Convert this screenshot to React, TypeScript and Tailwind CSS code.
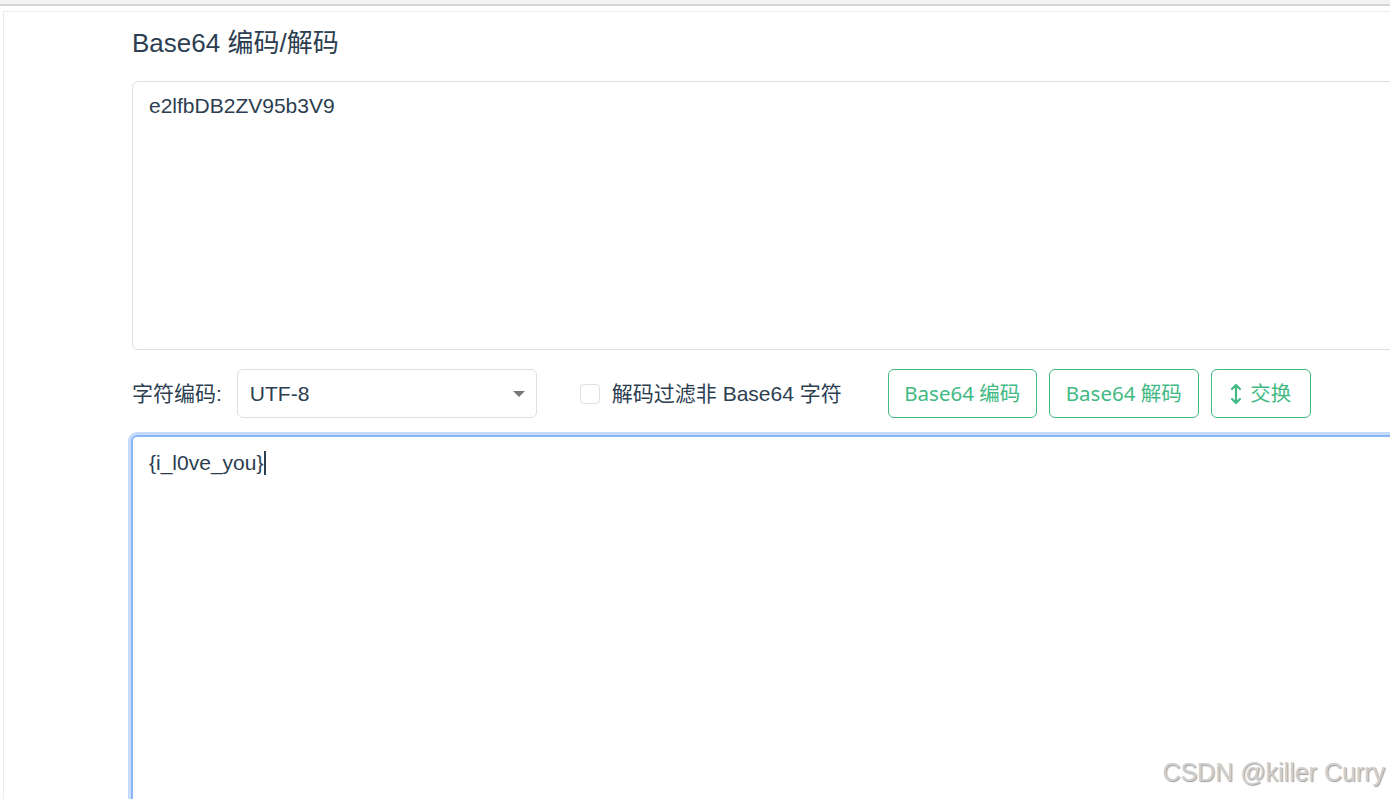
const cjk = "font-['Liberation_Sans','Noto_Sans_CJK_SC',sans-serif]"

function GreenButton({ width, children }: { width: string; children: React.ReactNode }) {
  return (
    <button
      type="button"
      className={`flex h-[49px] items-center justify-center gap-2 whitespace-nowrap rounded-[6px] border border-[#42b983] bg-white text-[20.5px] text-[#42b983] font-['Noto_Sans','Noto_Sans_CJK_SC',sans-serif] ${width}`}
    >
      {children}
    </button>
  )
}

export default function App() {
  return (
    <div className={`relative h-screen w-full overflow-hidden bg-white text-[#2c3e50] ${cjk}`}>
      <div className="h-[4px] bg-[#f2f2f2]" />
      <div className="h-[2px] bg-[#d6d6d6]" />
      <div className="h-[5px]" />
      <div className="ml-[3px] h-full border-l border-t border-[#ebebeb] pl-[128px] pt-[13px]">
        <div className="w-[1320px]">
          <h1 className="text-[26px] leading-[36px] font-normal">Base64 编码/解码</h1>

          <textarea
            readOnly
            value="e2lfbDB2ZV95b3V9"
            className="mt-[20px] block h-[269px] w-full resize-none rounded-[6px] border border-[#dcdfe6] px-4 py-[8px] text-[21px] leading-[31px] text-[#2c3e50] outline-none"
          />

          <div className="mt-[19px] flex h-[49px] items-center">
            <span className="text-[21px]">字符编码:</span>
            <div className="ml-[15px] flex h-[49px] w-[300px] items-center justify-between rounded-[6px] border border-[#dcdfe6] pl-[12px] pr-[11px]">
              <span className="text-[21px]">UTF-8</span>
              <svg width="12" height="8" viewBox="0 0 12 8">
                <path d="M0 1h12L6 7z" fill="#777" />
              </svg>
            </div>

            <label className="ml-[43px] flex items-center gap-[12px]">
              <span className="h-[20px] w-[20px] rounded-[4px] border border-[#dcdfe6] bg-white" />
              <span className="text-[21px]">解码过滤非 Base64 字符</span>
            </label>

            <div className="ml-[46px] flex gap-[12px]">
              <GreenButton width="w-[149px]">Base64 编码</GreenButton>
              <GreenButton width="w-[150px]">Base64 解码</GreenButton>
              <GreenButton width="w-[100px]">
                <svg width="12" height="22" viewBox="0 0 12 22" fill="none" stroke="#42b983" strokeWidth="2.2" strokeLinecap="round" strokeLinejoin="round">
                  <path d="M6 2v18M2 6l4-4 4 4M2 16l4 4 4-4" />
                </svg>
                交换
              </GreenButton>
            </div>
          </div>

          <div className="ml-[-1px] mt-[17px] h-[400px] rounded-[6px] border-2 border-[#8ab6f6] px-4 py-[9px] text-[21px] leading-[31px] ring-[3px] ring-[#c6dcfc]">
            <span>{'{i_l0ve_you}'}</span>
            <span className="ml-[1px] inline-block h-[24px] w-[1.5px] translate-y-[5px] bg-[#2c3e50]" />
          </div>
        </div>
      </div>

      <div className="pointer-events-none absolute bottom-[8px] right-[5px] text-[25px] text-[#cfcfcf] font-['Liberation_Sans',sans-serif] [text-shadow:1px_1px_1px_#a0a0a0]">
        CSDN @killer Curry
      </div>
    </div>
  )
}
